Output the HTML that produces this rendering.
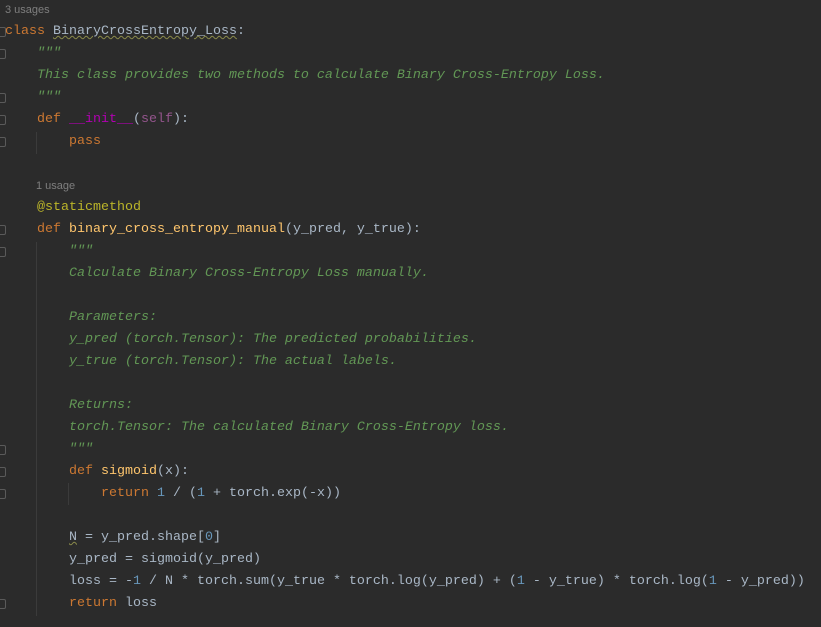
<!DOCTYPE html>
<html><head><meta charset="utf-8"><style>
html,body{margin:0;padding:0;background:#2b2b2b;width:821px;height:627px;overflow:hidden}
#c{position:absolute;left:5px;top:-1px;font-family:"Liberation Mono",monospace;font-size:13.33px;color:#a9b7c6}
.l{height:22px;line-height:22px;white-space:pre}
.h{font-family:"Liberation Sans",sans-serif;font-size:11px;color:#7f7f7f}
.k{color:#cc7832}.d{color:#629755;font-style:italic}.n{color:#6897bb}.f{color:#ffc66d}
.s{color:#94558d}.m{color:#b200b2}.a{color:#bbb529}
.u{text-decoration:underline wavy #8a8a4a;text-decoration-thickness:1px}
.g{position:absolute;width:1px;background:#3b3b3b}
.fi{position:absolute;left:0;width:5px;height:8px;border:1px solid #5a5a5a;border-left:none;border-radius:0 2px 2px 0}
</style></head><body>
<div class="g" style="left:36px;top:132px;height:22px"></div>
<div class="g" style="left:36px;top:242px;height:374px"></div>
<div class="g" style="left:68px;top:483px;height:22px"></div>
<div class="fi" style="top:27px"></div><div class="fi" style="top:49px"></div><div class="fi" style="top:93px"></div><div class="fi" style="top:115px"></div><div class="fi" style="top:137px"></div>
<div class="fi" style="top:225px"></div><div class="fi" style="top:247px"></div><div class="fi" style="top:445px"></div><div class="fi" style="top:467px"></div><div class="fi" style="top:489px"></div><div class="fi" style="top:599px"></div>
<div id="c"><div class="l h">3 usages</div><div class="l"><span class="k">class</span> <span class="u">BinaryCrossEntropy_Loss</span>:</div><div class="l d">    """</div><div class="l d">    This class provides two methods to calculate Binary Cross-Entropy Loss.</div><div class="l d">    """</div><div class="l">    <span class="k">def</span> <span class="m">__init__</span>(<span class="s">self</span>):</div><div class="l">        <span class="k">pass</span></div><div class="l"> </div><div class="l h"><span style="padding-left:31px">1 usage</span></div><div class="l">    <span class="a">@staticmethod</span></div><div class="l">    <span class="k">def</span> <span class="f">binary_cross_entropy_manual</span>(y_pred, y_true):</div><div class="l d">        """</div><div class="l d">        Calculate Binary Cross-Entropy Loss manually.</div><div class="l"> </div><div class="l d">        Parameters:</div><div class="l d">        y_pred (torch.Tensor): The predicted probabilities.</div><div class="l d">        y_true (torch.Tensor): The actual labels.</div><div class="l"> </div><div class="l d">        Returns:</div><div class="l d">        torch.Tensor: The calculated Binary Cross-Entropy loss.</div><div class="l d">        """</div><div class="l">        <span class="k">def</span> <span class="f">sigmoid</span>(x):</div><div class="l">            <span class="k">return</span> <span class="n">1</span> / (<span class="n">1</span> + torch.exp(-x))</div><div class="l"> </div><div class="l">        <span class="u">N</span> = y_pred.shape[<span class="n">0</span>]</div><div class="l">        y_pred = sigmoid(y_pred)</div><div class="l">        loss = -<span class="n">1</span> / N * torch.sum(y_true * torch.log(y_pred) + (<span class="n">1</span> - y_true) * torch.log(<span class="n">1</span> - y_pred))</div><div class="l">        <span class="k">return</span> loss</div></div>
</body></html>
